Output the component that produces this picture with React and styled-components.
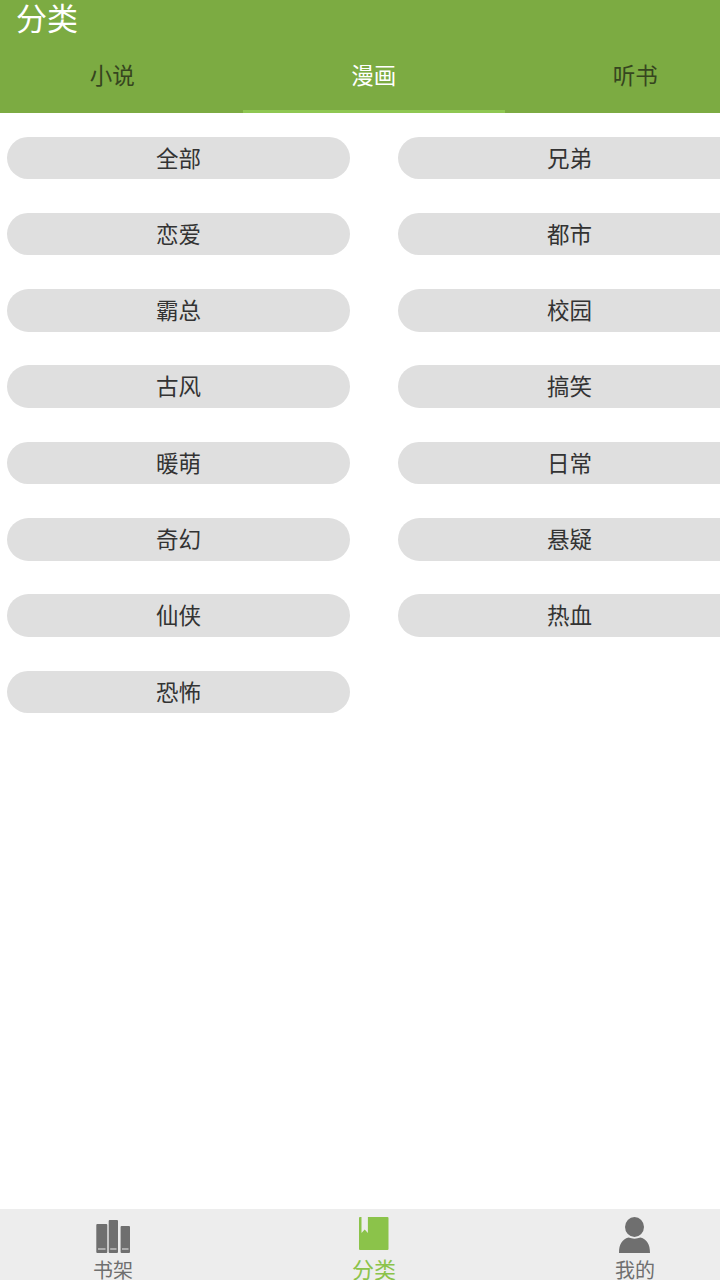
import styled, { createGlobalStyle } from "styled-components";

const GlobalStyle = createGlobalStyle`
  html, body {
    margin: 0;
    padding: 0;
    background: #fff;
    font-family: "Noto Sans CJK SC", "Liberation Sans", sans-serif;
  }
`;

const Page = styled.div`
  width: 720px;
  height: 1280px;
  display: flex;
  flex-direction: column;
  overflow: hidden;
`;

const Header = styled.header`
  height: 113px;
  flex-shrink: 0;
  background: #7cab42;
  overflow: hidden;
`;

const Title = styled.h1`
  margin: 0;
  padding-left: 16px;
  height: 37px;
  font-size: 31px;
  font-weight: 400;
  line-height: 33px;
  color: #fff;
`;

const Tabs = styled.div`
  display: flex;
  margin-left: -18.5px;
  height: 76px;
`;

const Tab = styled.div`
  flex: 0 0 261.5px;
  box-sizing: border-box;
  padding-top: 21px;
  text-align: center;
  font-size: 22.5px;
  line-height: 32px;
  color: ${props => props.active ? "#fff" : "#36451f"};
  border-bottom: 3px solid ${props => props.active ? "#8fc752" : "transparent"};
`;

const Content = styled.main`
  flex: 1;
  padding: 23.5px 0 0 7px;
  overflow: hidden;
`;

const PillGrid = styled.div`
  display: grid;
  grid-template-columns: 343px 343px;
  column-gap: 48px;
  row-gap: 33.83px;
`;

const Pill = styled.div`
  height: 42.5px;
  border-radius: 22px;
  background: #dfdfdf;
  color: #333;
  font-size: 22.5px;
  line-height: 40px;
  text-align: center;
`;

const BottomNav = styled.nav`
  height: 71px;
  flex-shrink: 0;
  display: grid;
  grid-template-columns: 1fr 1fr 1fr;
  background: #ededed;
`;

const NavItem = styled.div`
  display: flex;
  flex-direction: column;
  align-items: center;
  padding-top: 8px;
  color: ${props => props.active ? "#8bc34a" : "#6f6f6f"};
  transform: translateX(${props => props.shift}px);
`;

const NavIcon = styled.svg`
  width: 36px;
  height: 36px;
  flex-shrink: 0;
  display: block;
  fill: currentColor;
`;

const NavLabel = styled.span`
  font-size: ${props => props.active ? "22px" : "20px"};
  line-height: ${props => props.active ? "22px" : "20px"};
  margin-top: ${props => props.active ? "4px" : "7px"};
  white-space: nowrap;
`;

const categories = [
  "全部", "兄弟", "恋爱", "都市", "霸总", "校园", "古风", "搞笑",
  "暖萌", "日常", "奇幻", "悬疑", "仙侠", "热血", "恐怖",
];

function ShelfIcon() {
  return (
    <NavIcon viewBox="0 0 36 36">
      <path fillRule="evenodd" d="M2.300 7h9a1 1 0 0 1 1 1v27a1 1 0 0 1-1 1h-9a1 1 0 0 1-1-1V8a1 1 0 0 1 1-1zM3 31.500v1h7.500v-1zM14.700 3h7.300a1 1 0 0 1 1 1v31a1 1 0 0 1-1 1h-7.300a1 1 0 0 1-1-1V4a1 1 0 0 1 1-1zM15.200 31.500v1h6.300v-1zM26.600 9h7.400a1 1 0 0 1 1 1v25a1 1 0 0 1-1 1h-7.400a1 1 0 0 1-1-1V10a1 1 0 0 1 1-1zM27 31.500v1h6.500v-1z" />
    </NavIcon>
  );
}

function BookIcon() {
  return (
    <NavIcon viewBox="0 0 36 36">
      <path d="M4 0h1.500v16l3.200-3.500 3.200 3.500V0H31.500a1 1 0 0 1 1 1v31a1 1 0 0 1-1 1H4a1 1 0 0 1-1-1V1a1 1 0 0 1 1-1z" />
    </NavIcon>
  );
}

function UserIcon() {
  return (
    <NavIcon viewBox="0 0 36 36">
      <ellipse cx="17.500" cy="10" rx="9.500" ry="10" />
      <path d="M2 36c0-9 3-13.500 9.500-15.500 4 1.500 8 1.500 12 0C30 22.500 33 27 33 36z" />
    </NavIcon>
  );
}

export default function App() {
  return (
    <Page>
      <GlobalStyle />
      <Header>
        <Title>分类</Title>
        <Tabs>
          <Tab>小说</Tab>
          <Tab active>漫画</Tab>
          <Tab>听书</Tab>
        </Tabs>
      </Header>
      <Content>
        <PillGrid>
          {categories.map(name => <Pill key={name}>{name}</Pill>)}
        </PillGrid>
      </Content>
      <BottomNav>
        <NavItem shift={-7}>
          <ShelfIcon />
          <NavLabel>书架</NavLabel>
        </NavItem>
        <NavItem active shift={14}>
          <BookIcon />
          <NavLabel active>分类</NavLabel>
        </NavItem>
        <NavItem shift={35}>
          <UserIcon />
          <NavLabel>我的</NavLabel>
        </NavItem>
      </BottomNav>
    </Page>
  );
}
